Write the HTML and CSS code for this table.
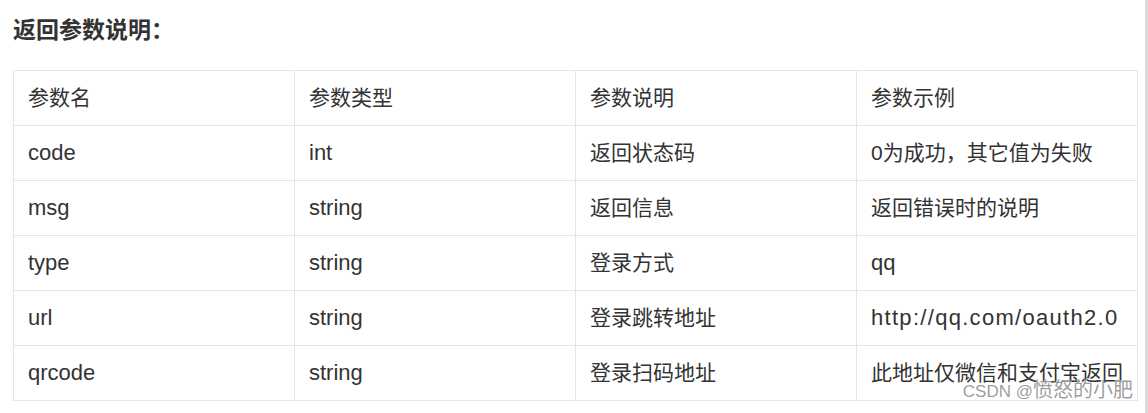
FILE: index.html
```html
<!DOCTYPE html>
<html lang="zh-CN">
<head>
<meta charset="utf-8">
<link rel="stylesheet" href="styles.css">
</head>
<body>
<div class="page">
  <h3 class="title">返回参数说明：</h3>
  <table class="params">
    <thead>
      <tr><th class="cn">参数名</th><th class="cn">参数类型</th><th class="cn">参数说明</th><th class="cn">参数示例</th></tr>
    </thead>
    <tbody>
      <tr><td>code</td><td>int</td><td class="cn">返回状态码</td><td class="cn">0为成功，其它值为失败</td></tr>
      <tr><td>msg</td><td>string</td><td class="cn">返回信息</td><td class="cn">返回错误时的说明</td></tr>
      <tr><td>type</td><td>string</td><td class="cn">登录方式</td><td>qq</td></tr>
      <tr><td>url</td><td>string</td><td class="cn">登录跳转地址</td><td class="url">http://qq.com/oauth2.0</td></tr>
      <tr><td>qrcode</td><td>string</td><td class="cn">登录扫码地址</td><td class="cn">此地址仅微信和支付宝返回</td></tr>
    </tbody>
  </table>
  <div class="watermark"><span class="wm-latin">CSDN @</span><span class="wm-cn">愤怒的小肥</span></div>
</div>
<div class="scrollbar"></div>
</body>
</html>
```
FILE: styles.css
```css
html, body {
  margin: 0;
  padding: 0;
  background: #fff;
}
body {
  font-family: "Liberation Sans", "Noto Sans CJK SC", sans-serif;
  color: #333;
}
.page {
  position: relative;
  padding: 14px 0 0 13px;
  width: 1125px;
}
.title {
  margin: 0 0 24px 0;
  font-size: 23px;
  font-weight: bold;
  line-height: 32px;
  color: #333;
}
.params {
  border-collapse: collapse;
  width: 1125px;
  table-layout: fixed;
}
.params th, .params td {
  border: 1px solid #e5e5e5;
  height: 55px;
  padding: 0 14px;
  text-align: left;
  font-weight: normal;
  font-size: 22px;
  line-height: 24px;
  vertical-align: middle;
  box-sizing: border-box;
  white-space: nowrap;
}
.params .cn {
  font-size: 21px;
}
.params .url {
  letter-spacing: 1.3px;
}
.watermark {
  position: absolute;
  right: 5px;
  bottom: -3px;
  color: rgba(140, 140, 140, 0.85);
  text-shadow: 0 0 1px #fff;
  line-height: 24px;
}
.wm-latin {
  font-size: 17px;
}
.wm-cn {
  font-size: 20px;
}
.scrollbar {
  position: fixed;
  top: 0;
  right: 0;
  width: 3px;
  height: 100%;
  background: #dcdcdc;
}
```
